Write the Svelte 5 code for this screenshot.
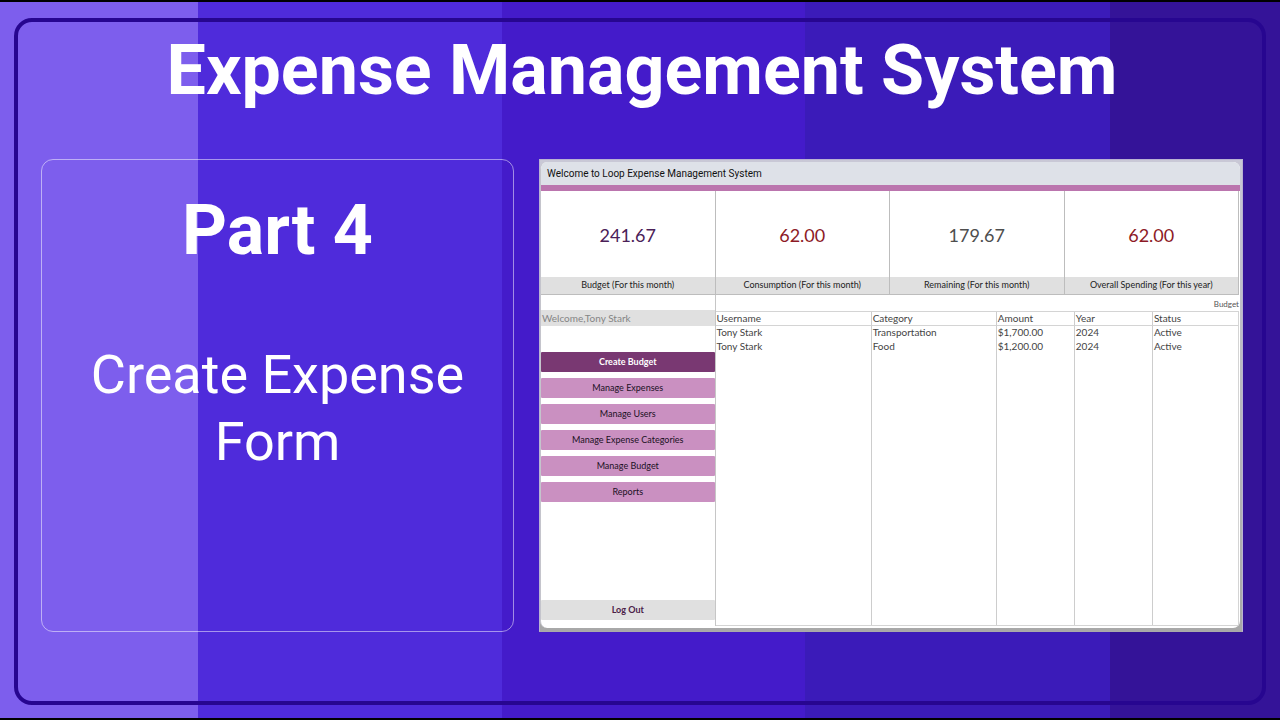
<script>
  const stats = [
    { value: '241.67', label: 'Budget (For this month)', tone: 'plum' },
    { value: '62.00', label: 'Consumption (For this month)', tone: 'red' },
    { value: '179.67', label: 'Remaining (For this month)', tone: 'grey' },
    { value: '62.00', label: 'Overall Spending (For this year)', tone: 'red' }
  ];
  const menu = ['Create Budget', 'Manage Expenses', 'Manage Users', 'Manage Expense Categories', 'Manage Budget', 'Reports'];
  const columns = [
    { name: 'Username', share: 156 },
    { name: 'Category', share: 125 },
    { name: 'Amount', share: 78 },
    { name: 'Year', share: 78 },
    { name: 'Status', share: 85 }
  ];
  const total = columns.reduce((sum, c) => sum + c.share, 0);
  const rows = [
    ['Tony Stark', 'Transportation', '$1,700.00', '2024', 'Active'],
    ['Tony Stark', 'Food', '$1,200.00', '2024', 'Active']
  ];
  let active = 'Create Budget';
</script>

<div class="slide">
  <div class="frame">
    <h1>Expense Management System</h1>
    <div class="content">
      <section class="part">
        <h2>Part 4</h2>
        <p>Create Expense Form</p>
      </section>

      <section class="shot">
        <div class="window">
          <header>Welcome to Loop Expense Management System</header>
          <div class="stats">
            {#each stats as stat}
              <div class="stat">
                <div class="value {stat.tone}">{stat.value}</div>
                <div class="label">{stat.label}</div>
              </div>
            {/each}
          </div>
          <div class="main">
            <nav>
              <div class="welcome">Welcome,Tony Stark</div>
              <div class="menu">
                {#each menu as item}
                  <button class:active={item === active} on:click={() => (active = item)}>{item}</button>
                {/each}
              </div>
              <button class="logout">Log Out</button>
            </nav>
            <div class="list">
              <div class="caption">Budget</div>
              <table>
                <colgroup>
                  {#each columns as col}
                    <col style="width: {(col.share / total) * 100}%" />
                  {/each}
                </colgroup>
                <thead>
                  <tr>
                    {#each columns as col}<th scope="col">{col.name}</th>{/each}
                  </tr>
                </thead>
                <tbody>
                  {#each rows as row}
                    <tr>
                      {#each row as cell}<td>{cell}</td>{/each}
                    </tr>
                  {/each}
                  <tr class="rest">
                    {#each columns as _}<td></td>{/each}
                  </tr>
                </tbody>
              </table>
            </div>
          </div>
        </div>
      </section>
    </div>
  </div>
</div>

<style>
  :global(body) {
    margin: 0;
    background: #000;
  }
  .slide, .slide * {
    box-sizing: border-box;
  }
  .slide {
    display: flex;
    min-height: 100vh;
    padding: 16px 14px 13px;
    border-top: 2px solid #000;
    border-bottom: 2px solid #000;
    background: linear-gradient(
      90deg,
      #7d5eed 0 15.5%,
      #4f2bdb 15.5% 39.2%,
      #441bca 39.2% 62.9%,
      #3b1bb9 62.9% 86.7%,
      #341398 86.7%
    );
    font-family: Lato, Carlito, sans-serif;
  }
  .frame {
    flex: 1;
    display: flex;
    flex-direction: column;
    min-width: 0;
    padding: 0 19px 69px 23px;
    border: 4px solid #270690;
    border-radius: 18px;
  }
  h1, h2, p {
    margin: 0;
    color: #fff;
    text-align: center;
    font-family: Roboto, sans-serif;
  }
  h1 {
    height: 137px;
    padding-top: 6px;
    font-size: 70px;
    line-height: 84px;
    font-weight: 700;
    white-space: nowrap;
  }
  .content {
    flex: 1;
    display: grid;
    grid-template-columns: 473fr 704fr;
    gap: 25px;
  }
  .part {
    padding: 28px 30px;
    border: 1px solid rgba(255, 255, 255, 0.5);
    border-radius: 12px;
  }
  h2 {
    font-size: 70px;
    line-height: 84px;
    font-weight: 700;
  }
  p {
    margin-top: 69px;
    font-size: 54px;
    font-weight: 400;
    line-height: 67px;
  }
  .shot {
    display: flex;
    padding: 2px 2px 3px 0;
    border: 1px solid #b9b3d2;
    border-bottom-color: #aaa;
    background: linear-gradient(#c9c8d6, #a8a8a8);
  }
  .window {
    flex: 1;
    display: flex;
    flex-direction: column;
    min-width: 0;
    overflow: hidden;
    border-left: 1px solid #c4c4cc;
    border-radius: 7px;
    background: #fff;
    color: #444;
    font-size: 10px;
  }
  header {
    height: 29px;
    padding-left: 6px;
    border-bottom: 6px solid #bb75ae;
    background: #dee1e8;
    color: #111;
    font-family: Roboto, sans-serif;
    line-height: 23px;
  }
  .stats {
    display: grid;
    grid-template-columns: repeat(4, 1fr);
    height: 104px;
    padding-right: 1px;
  }
  .stat {
    display: flex;
    flex-direction: column;
    border-right: 1px solid #bdbdbd;
    border-bottom: 1px solid #bdbdbd;
  }
  .value {
    flex: 1;
    display: flex;
    align-items: center;
    justify-content: center;
    padding-top: 1px;
    font-size: 18px;
  }
  .plum { color: #4b2158; }
  .red { color: #8d1a26; }
  .grey { color: #4e4e4e; }
  .label {
    height: 17px;
    background: #e0e0e0;
    color: #222;
    font-size: 9px;
    line-height: 16px;
    text-align: center;
  }
  .main {
    flex: 1;
    display: grid;
    grid-template-columns: 1fr 3fr;
    padding: 0 1px 2px 0;
  }
  nav {
    display: flex;
    flex-direction: column;
    padding: 15px 1px 6px 0;
  }
  .welcome {
    height: 16px;
    padding-left: 1px;
    background: #e0e0e0;
    color: #858585;
    line-height: 16px;
  }
  .menu {
    display: grid;
    gap: 6px;
    margin: 26px 0 auto;
  }
  button {
    height: 20px;
    padding: 0 0 1px;
    border: 0;
    border-radius: 1px;
    background: #ca90c1;
    color: #20101f;
    font: inherit;
    font-size: 9px;
    cursor: pointer;
  }
  .active {
    background: #793872;
    color: #fff;
    font-weight: 700;
  }
  .logout {
    background: #e0e0e0;
    color: #4b2147;
    font-weight: 700;
  }
  .list {
    display: flex;
    flex-direction: column;
    border-left: 1px solid #c6c6c6;
    margin-left: -1px;
  }
  .caption {
    height: 16px;
    color: #555;
    font-size: 8px;
    line-height: 18px;
    text-align: right;
  }
  table {
    flex: 1;
    width: 100%;
    table-layout: fixed;
    border-collapse: separate;
    border-spacing: 0;
    border: solid #d4d4d4;
    border-width: 1px 1px 1px 0;
  }
  th, td {
    height: 14px;
    padding: 0 1px;
    border-right: 1px solid #cdcdcd;
    line-height: 13px;
    font-weight: 400;
    text-align: left;
    white-space: nowrap;
  }
  td {
    padding-bottom: 2px;
    line-height: 12px;
  }
  th {
    border-bottom: 1px solid #d4d4d4;
  }
  th:last-child, td:last-child {
    border-right: 0;
  }
  .rest td {
    height: auto;
  }
</style>
